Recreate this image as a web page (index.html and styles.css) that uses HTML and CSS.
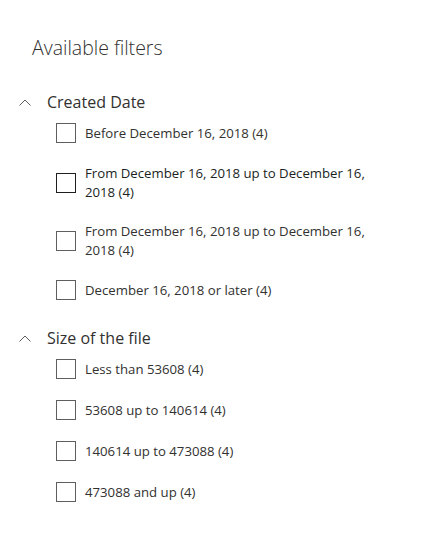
FILE: index.html
```html
<!DOCTYPE html>
<html>
<head>
<meta charset="utf-8">
<link rel="stylesheet" href="styles.css">
</head>
<body>
<div class="panel">
  <h1 class="title">Available filters</h1>
  <section class="group">
    <div class="group-header">
      <svg class="chevron" width="12" height="7" viewBox="0 0 12 7"><path d="M0.5 6.5 L6 1 L11.5 6.5" fill="none" stroke="#605e5c" stroke-width="1"/></svg>
      <span class="group-name">Created Date</span>
    </div>
    <ul class="options">
      <li class="option"><span class="box"></span><span class="label">Before December 16, 2018 (4)</span></li>
      <li class="option option-hover"><span class="box"></span><span class="label">From December 16, 2018 up to December 16, 2018 (4)</span></li>
      <li class="option"><span class="box"></span><span class="label">From December 16, 2018 up to December 16, 2018 (4)</span></li>
      <li class="option"><span class="box"></span><span class="label">December 16, 2018 or later (4)</span></li>
    </ul>
  </section>
  <section class="group">
    <div class="group-header">
      <svg class="chevron" width="12" height="7" viewBox="0 0 12 7"><path d="M0.5 6.5 L6 1 L11.5 6.5" fill="none" stroke="#605e5c" stroke-width="1"/></svg>
      <span class="group-name">Size of the file</span>
    </div>
    <ul class="options">
      <li class="option"><span class="box"></span><span class="label">Less than 53608 (4)</span></li>
      <li class="option"><span class="box"></span><span class="label">53608 up to 140614 (4)</span></li>
      <li class="option"><span class="box"></span><span class="label">140614 up to 473088 (4)</span></li>
      <li class="option"><span class="box"></span><span class="label">473088 and up (4)</span></li>
    </ul>
  </section>
</div>
</body>
</html>
```
FILE: styles.css
```css
html, body {
  margin: 0;
  padding: 0;
  background: #ffffff;
}
body {
  font-family: "Open Sans", "Noto Sans", sans-serif;
  color: #323130;
}
.panel {
  padding: 34px 0 0 0;
}
.title {
  margin: 0 0 0 32px;
  font-size: 19.5px;
  font-weight: 300;
  line-height: 28px;
  color: #323130;
}
.group {
  margin-top: 28px;
}
.group + .group {
  margin-top: 26px;
}
.group-header {
  display: flex;
  align-items: center;
  height: 24px;
  padding-left: 19px;
}
.chevron {
  display: block;
  margin-right: 16px;
}
.group-name {
  font-size: 16px;
  line-height: 24px;
  color: #323130;
}
.options {
  list-style: none;
  margin: 0;
  padding: 0 0 0 56px;
  display: flex;
  flex-direction: column;
  gap: 21px;
}
.group-header + .options {
  margin-top: 9px;
}
.option {
  display: flex;
  align-items: center;
  min-height: 20px;
}
.box {
  flex: none;
  width: 20px;
  height: 20px;
  box-sizing: border-box;
  border: 1px solid #605e5c;
  margin-right: 9px;
}
.label {
  font-size: 13.2px;
  line-height: 18.5px;
  max-width: 300px;
  color: #323130;
}
.option-hover .box {
  border-color: #201f1e;
}
.option-hover .label {
  color: #201f1e;
}
```
